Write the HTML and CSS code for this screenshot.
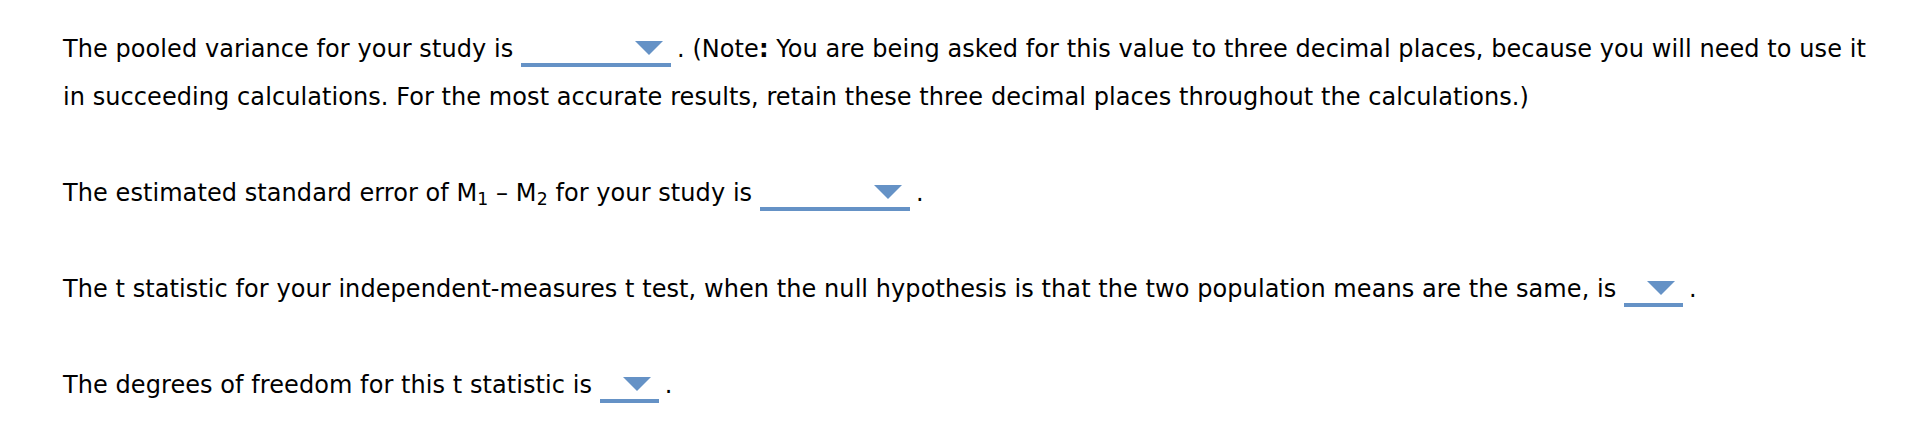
FILE: index.html
```html
<!DOCTYPE html>
<html>
<head>
<meta charset="utf-8">
<link rel="stylesheet" href="styles.css">
</head>
<body>
<div class="page">
  <p class="q">The pooled variance for your study is <span class="dd dd-wide"><svg class="arrow" viewBox="0 0 28 14"><polygon points="0,0 28,0 14,14"/></svg></span>. (Note<b>:</b> You are being asked for this value to three decimal places, because you will need to use it in succeeding calculations. For the most accurate results, retain these three decimal places throughout the calculations.)</p>
  <p class="q">The estimated standard error of M<sub>1</sub> – M<sub>2</sub> for your study is <span class="dd dd-wide"><svg class="arrow" viewBox="0 0 28 14"><polygon points="0,0 28,0 14,14"/></svg></span>.</p>
  <p class="q">The t statistic for your independent-measures t test, when the null hypothesis is that the two population means are the same, is <span class="dd dd-narrow"><svg class="arrow" viewBox="0 0 28 14"><polygon points="0,0 28,0 14,14"/></svg></span>.</p>
  <p class="q">The degrees of freedom for this t statistic is <span class="dd dd-narrow"><svg class="arrow" viewBox="0 0 28 14"><polygon points="0,0 28,0 14,14"/></svg></span>.</p>
</div>
</body>
</html>
```

FILE: styles.css
```css
html, body {
  margin: 0;
  padding: 0;
  background: #ffffff;
}

.page {
  padding: 25px 30px 0 63px;
  font-family: "DejaVu Sans", Verdana, sans-serif;
  font-size: 24px;
  line-height: 48px;
  letter-spacing: 0.07px;
  color: #000000;
}

.q {
  margin: 0 0 48px 0;
}

.q b {
  font-weight: bold;
}

.q sub {
  font-size: 0.72em;
  line-height: 0;
  vertical-align: -0.22em;
}

.dd {
  display: inline-block;
  vertical-align: baseline;
  box-sizing: border-box;
  padding: 0 8px 8px 0;
  border-bottom: 4px solid #6592c6;
  margin: 0 6px -10px 0;
}

.dd-wide {
  width: 150px;
}

.dd-narrow {
  width: 59px;
}

.arrow {
  display: block;
  width: 28px;
  height: 14px;
  margin-left: auto;
  fill: #6592c6;
}
```
